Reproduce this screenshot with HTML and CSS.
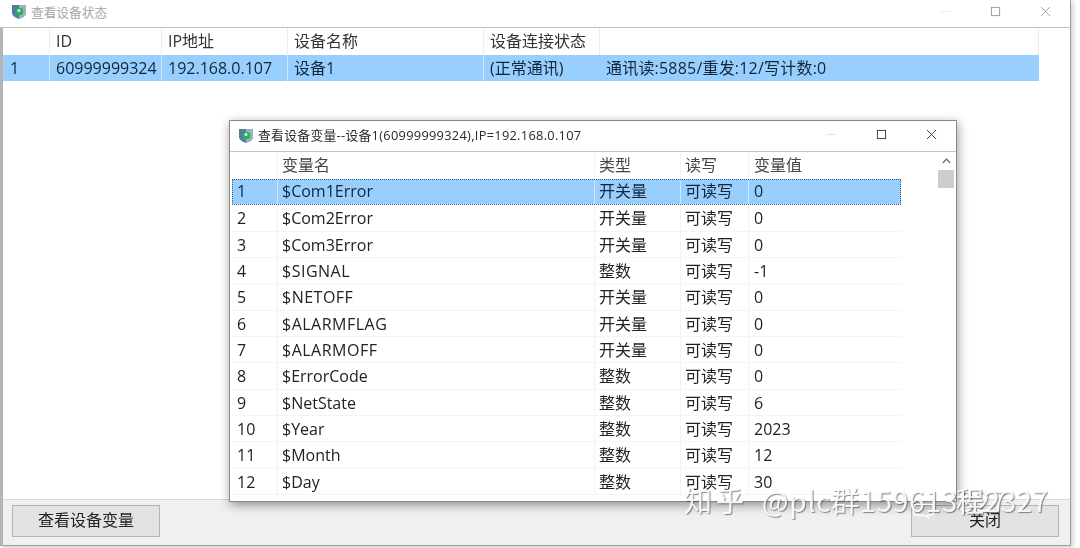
FILE: index.html
```html
<!DOCTYPE html>
<html lang="zh">
<head>
<meta charset="utf-8">
<title>查看设备状态</title>
<link rel="stylesheet" href="styles.css">
</head>
<body>
<div class="window">
  <div class="titlebar">
    <svg class="app-icon" viewBox="0 0 16 16"><path d="M1 2h14v8c0 3-4 5-7 6-3-1-7-3-7-6z" fill="#4f7f9c"/><path d="M8 2h7v8c0 3-4 5-7 6z" fill="#9db2bf"/><circle cx="8.5" cy="8.5" r="3.8" fill="#2fae63"/><circle cx="8" cy="7.6" r="1.5" fill="#c9f2d6"/></svg>
    <span class="title-text faded">查看设备状态</span>
    <div class="controls faded-controls">
      <svg viewBox="0 0 12 12" class="ctl"><path d="M1 6h10" stroke="#eee" fill="none"/></svg>
      <svg viewBox="0 0 12 12" class="ctl"><rect x="1.5" y="1.5" width="9" height="9" stroke="#999" fill="none"/></svg>
      <svg viewBox="0 0 12 12" class="ctl"><path d="M1 1l10 10M11 1L1 11" stroke="#999" fill="none"/></svg>
    </div>
  </div>
  <div class="client">
    <div class="grid-main">
      <div class="row-main head-main">
        <span></span><span>ID</span><span>IP地址</span><span>设备名称</span><span>设备连接状态</span><span></span>
      </div>
      <div class="row-main sel-main">
        <span>1</span><span>60999999324</span><span>192.168.0.107</span><span>设备1</span><span>(正常通讯)</span><span class="stats">通讯读:5885/重发:12/写计数:0</span>
      </div>
    </div>
  </div>
  <div class="footer">
    <button class="btn">查看设备变量</button>
    <button class="btn">关闭</button>
  </div>
</div>

<div class="dialog">
  <div class="dlg-title">
    <svg class="app-icon" viewBox="0 0 16 16"><path d="M1 2h14v8c0 3-4 5-7 6-3-1-7-3-7-6z" fill="#4f7f9c"/><path d="M8 2h7v8c0 3-4 5-7 6z" fill="#9db2bf"/><circle cx="8.5" cy="8.5" r="3.8" fill="#2fae63"/><circle cx="8" cy="7.6" r="1.5" fill="#c9f2d6"/></svg>
    <span class="dlg-text">查看设备变量--设备1(60999999324),IP=192.168.0.107</span>
    <div class="controls dlg-controls">
      <svg viewBox="0 0 12 12" class="ctl"><path d="M1 6h10" stroke="#ddd" fill="none"/></svg>
      <svg viewBox="0 0 12 12" class="ctl"><rect x="1.5" y="1.5" width="9" height="9" stroke="#333" fill="none"/></svg>
      <svg viewBox="0 0 12 12" class="ctl"><path d="M1 1l10 10M11 1L1 11" stroke="#333" fill="none"/></svg>
    </div>
  </div>
  <div class="dlg-body">
    <div class="vars">
      <div class="vrow vhead"><span></span><span>变量名</span><span>类型</span><span>读写</span><span>变量值</span></div>
      <div class="vrow vsel"><span>1</span><span>$Com1Error</span><span>开关量</span><span>可读写</span><span>0</span></div>
      <div class="vrow"><span>2</span><span>$Com2Error</span><span>开关量</span><span>可读写</span><span>0</span></div>
      <div class="vrow"><span>3</span><span>$Com3Error</span><span>开关量</span><span>可读写</span><span>0</span></div>
      <div class="vrow"><span>4</span><span class="caps">$SIGNAL</span><span>整数</span><span>可读写</span><span>-1</span></div>
      <div class="vrow"><span>5</span><span class="caps">$NETOFF</span><span>开关量</span><span>可读写</span><span>0</span></div>
      <div class="vrow"><span>6</span><span class="caps">$ALARMFLAG</span><span>开关量</span><span>可读写</span><span>0</span></div>
      <div class="vrow"><span>7</span><span class="caps">$ALARMOFF</span><span>开关量</span><span>可读写</span><span>0</span></div>
      <div class="vrow"><span>8</span><span>$ErrorCode</span><span>整数</span><span>可读写</span><span>0</span></div>
      <div class="vrow"><span>9</span><span>$NetState</span><span>整数</span><span>可读写</span><span>6</span></div>
      <div class="vrow"><span>10</span><span>$Year</span><span>整数</span><span>可读写</span><span>2023</span></div>
      <div class="vrow"><span>11</span><span>$Month</span><span>整数</span><span>可读写</span><span>12</span></div>
      <div class="vrow"><span>12</span><span>$Day</span><span>整数</span><span>可读写</span><span>30</span></div>
    </div>
    <div class="scrollbar">
      <svg class="sb-arrow" viewBox="0 0 10 6"><path d="M1 5l4-4 4 4" stroke="#555" stroke-width="1.3" fill="none"/></svg>
      <div class="sb-thumb"></div>
    </div>
  </div>
</div>

<div class="wm wm-a">知乎</div>
<div class="wm wm-c">@plc群159613827</div>
<div class="wm wm-b">程2327</div>
<svg class="wm-bubble" viewBox="0 0 40 30"><path d="M6 2h26c3 0 5 2 5 5v10c0 3-2 5-5 5h-6l3 5-9-5H6c-3 0-5-2-5-5V7c0-3 2-5 5-5z" fill="none" stroke="#fff" stroke-width="2"/></svg>
</body>
</html>
```

FILE: styles.css
```css
* { box-sizing: border-box; }
html, body { margin: 0; padding: 0; }
body {
  width: 1080px;
  height: 548px;
  overflow: hidden;
  background: #fff;
  position: relative;
  font-family: "Open Sans", "Noto Sans CJK SC", sans-serif;
  font-size: 16px;
  color: #222;
}
.window, .dialog, .wm, .wm-bubble { filter: blur(.35px); }
.window {
  width: 1071px;
  height: 546px;
  border-left: 3px solid #b4b4b4;
  border-right: 1px solid #9c9c9c;
  border-bottom: 1px solid #a0a0a0;
  background: #f0f0f0;
  display: flex;
  flex-direction: column;
  box-shadow: 2px 2px 5px rgba(0,0,0,.2);
}
.titlebar {
  height: 28px;
  flex: none;
  background: #fff;
  border-bottom: 1px solid #bdbdbd;
  display: flex;
  align-items: center;
  padding-left: 11px;
  margin-left: -3px;
  padding-bottom: 5px;
}
.app-icon { width: 16px; height: 16px; flex: none; }
.title-text { margin-left: 4px; font-size: 12.7px; }
.faded { color: #a8a8a8; }
.controls { margin-left: auto; display: flex; }
.ctl { width: 11px; height: 11px; }
.faded-controls { gap: 39px; padding-right: 19px; }
.client {
  flex: 1;
  background: #fff;
  border-bottom: 1px solid #d8d8d8;
}
.row-main {
  display: grid;
  grid-template-columns: 46px 112px 126px 196px 116px 1fr;
  width: 1036px;
}
.row-main span {
  padding-left: 6px;
  border-left: 1px solid #ececec;
  white-space: nowrap;
  line-height: 24px;
}
.row-main span:first-child { border-left: 0; }
.head-main { height: 27px; align-items: center; border-right: 1px solid #ececec; }
.head-main span { height: 27px; line-height: 27px; color: #333; }
.sel-main { height: 26px; background: #99cffe; color: #12263a; }
.sel-main span { height: 26px; line-height: 26px; border-left-color: #cfe6fb; }
.sel-main span:first-child { padding-left: 7px; }
.sel-main .stats { letter-spacing: .2px; border-left: 0; padding-left: 7px; }
.footer {
  height: 45px;
  flex: none;
  display: flex;
  justify-content: space-between;
  align-items: flex-start;
  padding: 5px 11px 0 9px;
}
.btn {
  width: 148px;
  height: 32px;
  border: 1px solid #b4b4b4;
  background: #e3e3e3;
  font: inherit;
  line-height: 26px;
  color: #222;
  padding: 0 0 2px;
}
.dialog {
  position: absolute;
  left: 229px;
  top: 120px;
  width: 728px;
  height: 382px;
  background: #fff;
  border: 1px solid #8a8a8a;
  box-shadow: 1px 3px 10px rgba(0,0,0,.4);
  display: flex;
  flex-direction: column;
}
.dlg-title {
  height: 31px;
  flex: none;
  display: flex;
  align-items: center;
  padding-left: 8px;
  padding-bottom: 3px;
  border-bottom: 1px solid #c4c4c4;
}
.dlg-text { margin-left: 4px; font-size: 12.8px; letter-spacing: .3px; color: #2a2a2a; }
.dlg-controls { gap: 39px; padding-right: 19px; }
.dlg-body { flex: 1; display: flex; overflow: hidden; padding-left: 2px; }
.vars { width: 669px; flex: none; }
.vrow {
  display: grid;
  grid-template-columns: 45px 317px 86px 68px 153px;
  height: 26.35px;
  border-bottom: 1px solid #f5f5f5;
  width: 669px;
}
.vrow span {
  padding-left: 4px;
  border-left: 1px solid #f2f2f2;
  white-space: nowrap;
  line-height: 26px;
}
.vrow span:first-child { border-left: 0; padding-left: 5px; }
.vrow span:last-child { padding-left: 5px; }
.vrow .caps { letter-spacing: .5px; }
.vhead { height: 27px; border-bottom: 0; }
.vhead span { line-height: 27px; color: #444; }
.vsel {
  background: #99cffe;
  outline: 1px dotted #405a78;
  outline-offset: -1px;
  color: #12263a;
}
.vsel span { border-left-color: #cfe6fb; line-height: 25px; }
.scrollbar {
  width: 18px;
  margin-left: auto;
  margin-right: 1px;
  display: flex;
  flex-direction: column;
  align-items: center;
  padding-top: 6px;
}
.sb-arrow { width: 9px; height: 6px; }
.sb-thumb { width: 16px; height: 18px; background: #cdcdcd; margin-top: 6px; }
.wm {
  position: absolute;
  top: 480px;
  color: rgba(255,255,255,.9);
  font-size: 28px;
  line-height: 40px;
  white-space: nowrap;
  text-shadow: 1px 1px 1px rgba(60,60,60,.6);
  font-family: "Noto Sans CJK SC", sans-serif;
}
.wm-a { left: 684px; letter-spacing: 4px; }
.wm-c { left: 762px; letter-spacing: .8px; }
.wm-b { left: 956px; letter-spacing: .5px; }
.wm-bubble { position: absolute; left: 913px; top: 503px; width: 22px; height: 17px; }
```
